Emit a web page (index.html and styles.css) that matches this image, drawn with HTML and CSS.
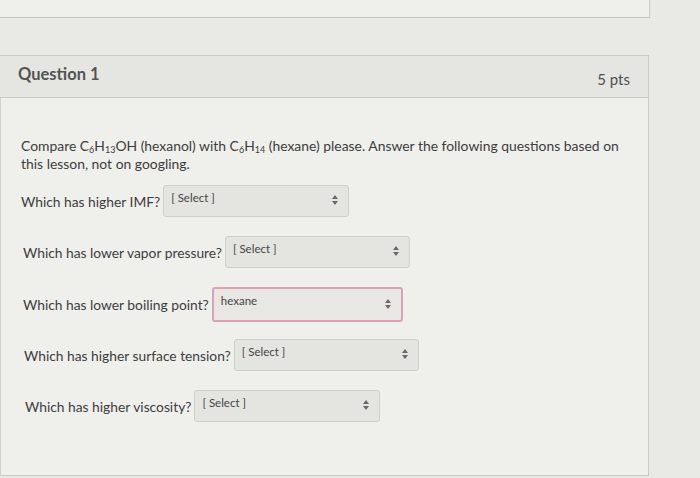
FILE: index.html
```html
<!DOCTYPE html>
<html lang="en">
<head>
    <meta charset="UTF-8">
    <meta name="viewport" content="width=device-width, initial-scale=1.0">
    <title>Question 1</title>
    <link rel="stylesheet" href="styles.css">
</head>
<body>
    <div class="prev-card"></div>

    <div class="question">
        <div class="q-header">
            <span class="q-title">Question 1</span>
            <span class="q-pts">5 pts</span>
        </div>
        <div class="q-body">
            <p class="q-text">Compare C<sub>6</sub>H<sub>13</sub>OH (hexanol) with C<sub>6</sub>H<sub>14</sub> (hexane) please. Answer the following questions based on this lesson, not on googling.</p>

            <div class="row">
                <span class="label">Which has higher IMF?</span>
                <div class="select w186"><span>[ Select ]</span><i class="arrows"></i></div>
            </div>
            <div class="row">
                <span class="label">Which has lower vapor pressure?</span>
                <div class="select w185"><span>[ Select ]</span><i class="arrows"></i></div>
            </div>
            <div class="row">
                <span class="label">Which has lower boiling point?</span>
                <div class="select w191 picked"><span>hexane</span><i class="arrows"></i></div>
            </div>
            <div class="row">
                <span class="label">Which has higher surface tension?</span>
                <div class="select w185"><span>[ Select ]</span><i class="arrows"></i></div>
            </div>
            <div class="row">
                <span class="label">Which has higher viscosity?</span>
                <div class="select w186"><span>[ Select ]</span><i class="arrows"></i></div>
            </div>
        </div>
    </div>
</body>
</html>
```

FILE: styles.css
```css
*{ margin: 0; padding: 0; box-sizing: border-box;}
body{ background: #e9e9e6; font-family: Lato, "Open Sans", sans-serif; color: #3d3d3d; height: 478px; overflow: hidden;}

.prev-card{ width: 650px; height: 18px; background: #efefec; border-right: 1px solid #cacac7; border-bottom: 1px solid #c6c6c3;}

.question{ width: 649px; margin-top: 37px; height: 421px; background: #efefec; border: 1px solid #c9c9c6; border-left: none;}
.q-header{ height: 42px; background: #e5e5e2; border-bottom: 1px solid #cacac7; display: flex; justify-content: space-between; padding: 0 18px 0 18px;}
.q-title{ font-size: 16.5px; font-weight: 700; color: #545454; padding-top: 8px;}
.q-pts{ font-size: 15px; color: #505050; padding-top: 14px;}

.q-body{ padding: 39px 20px 0 20px; border-left: 1px solid #cfcfcc; height: 378px;}
.q-text{ font-size: 13.9px; line-height: 18px; width: 605px; margin-bottom: 12px;}
.q-text sub{ font-size: 9px; position: relative; top: 2px; vertical-align: baseline; line-height: 0;}

.row{ display: flex; align-items: center; height: 32px; margin-bottom: 19px; font-size: 13.8px;}
.row:nth-of-type(2){ padding-left: 2px;}
.row:nth-of-type(3){ padding-left: 2px; height: 35px; margin-bottom: 17px;}
.row:nth-of-type(4){ padding-left: 3px;}
.row:nth-of-type(5){ padding-left: 4px;}
.label{ margin-right: 3px;}

.select{ height: 32px; background: #e4e4e1; border: 1px solid #cfcfcc; border-radius: 3px; display: flex; align-items: center; justify-content: space-between; padding: 0 10px 2px 7px; font-size: 11.5px; color: #454545;}
.select span{ margin-top: -6px;}
.select.picked{ border: 2px solid #d9a3b7; background: #e8e7e4; height: 35px;}
.w185{ width: 185px;}
.w186{ width: 186px;}
.w191{ width: 191px;}

.arrows{ position: relative; width: 6px; height: 10px;}
.arrows::before, .arrows::after{ content: ""; position: absolute; left: 0; border-left: 3px solid transparent; border-right: 3px solid transparent;}
.arrows::before{ top: 0; border-bottom: 4px solid #6a6a6a;}
.arrows::after{ bottom: 0; border-top: 4px solid #6a6a6a;}
```
